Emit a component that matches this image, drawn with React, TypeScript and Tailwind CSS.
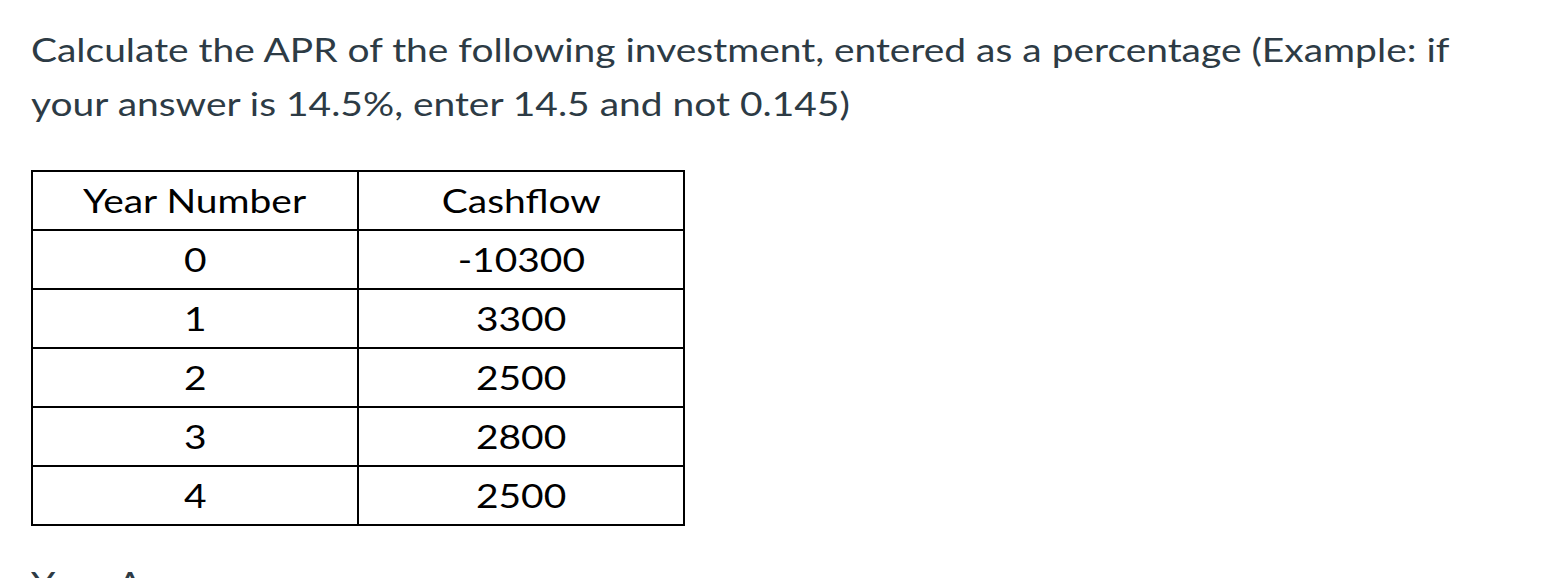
const rows = [
  { year: "0", cash: "-10300" },
  { year: "1", cash: "3300" },
  { year: "2", cash: "2500" },
  { year: "3", cash: "2800" },
  { year: "4", cash: "2500" },
];

// the source text is drawn a little wide, so each run of text is stretched
function Wide({ children }: { children: React.ReactNode }) {
  return <span className="inline-block scale-x-[1.217]">{children}</span>;
}

export default function App() {
  return (
    <div className="w-[1566px] h-[578px] overflow-hidden bg-white pl-[31px] pt-[23px] font-['Lato','Liberation_Sans',sans-serif]">
      <p className="text-[32px] leading-[54px] text-[#2d3b45]">
        <span className="block origin-left scale-x-[1.217] whitespace-nowrap">
          Calculate the APR of the following investment, entered as a percentage (Example: if
        </span>
        <span className="block origin-left scale-x-[1.217] whitespace-nowrap">
          your answer is 14.5%, enter 14.5 and not 0.145)
        </span>
      </p>

      <table className="mt-[39px] w-[654px] border-collapse text-[32px] text-black table-fixed">
        <thead>
          <tr>
            <th className="h-[59px] border-2 border-black font-normal">
              <Wide>Year Number</Wide>
            </th>
            <th className="h-[59px] border-2 border-black font-normal">
              <Wide>Cashflow</Wide>
            </th>
          </tr>
        </thead>
        <tbody>
          {rows.map((row) => (
            <tr key={row.year}>
              <td className="h-[59px] border-2 border-black text-center">
                <Wide>{row.year}</Wide>
              </td>
              <td className="h-[59px] border-2 border-black text-center">
                <Wide>{row.cash}</Wide>
              </td>
            </tr>
          ))}
        </tbody>
      </table>

      <p className="mt-[31px] text-[32px] leading-[54px] text-[#2d3b45]">
        <span className="block origin-left scale-x-[1.217] whitespace-nowrap">Your Answer:</span>
      </p>
    </div>
  );
}
